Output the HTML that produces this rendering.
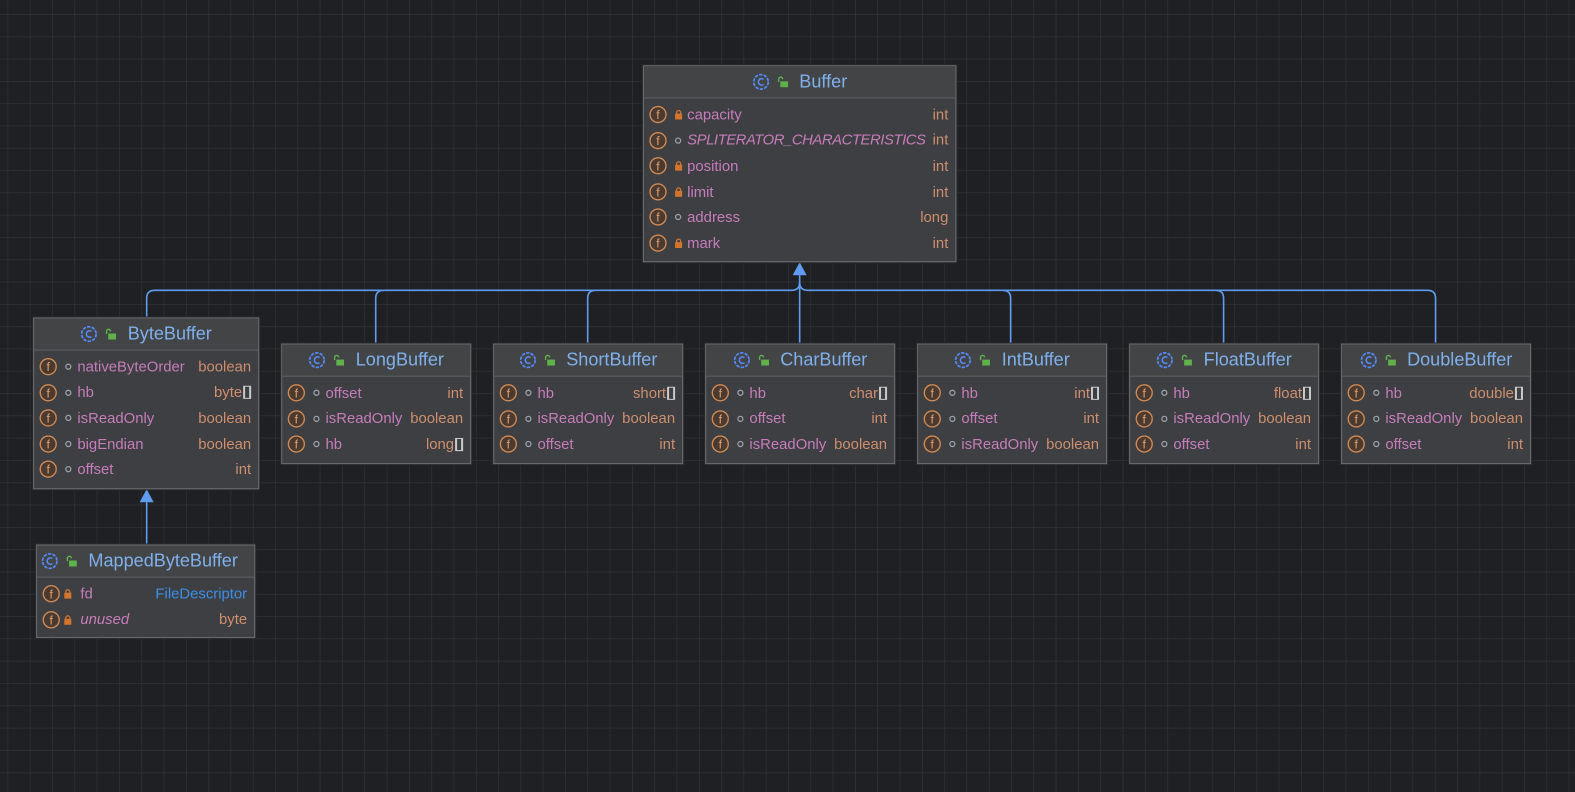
<!DOCTYPE html>
<html><head><meta charset="utf-8"><style>
*{margin:0;padding:0;box-sizing:border-box}
html,body{width:1575px;height:792px;overflow:hidden;background:#1f2023}
body{font-family:"Liberation Sans",sans-serif;position:relative}
#w{position:absolute;left:0;top:0;width:1575px;height:792px;transform:scale(1.0046);transform-origin:0 0}
#grid{position:absolute;left:0;top:0}
.box{position:absolute;background:#3d3f42;border:1px solid #6b6d70;box-shadow:0 0 0 1px #2a2b2d}
.hd{height:32px;background:#434446;border-bottom:1px solid #5e6063;display:flex;align-items:center;justify-content:center;color:#7fb0ec;font-size:18px}
.hd svg{margin-right:8px}
.bd{padding-top:4px}
.r{height:25.6px;display:flex;align-items:center;font-size:14.8px;position:relative}
.r .f{position:absolute;left:5px;top:3px}
.r .v{position:absolute;left:30px;top:8px}
.r .n{position:absolute;left:43px;color:#c77dbb}
.r .t{position:absolute;right:7px;color:#cf8e6d}
.i{font-style:italic}
.br{display:inline-block;width:8px;height:13px;border:1.5px solid #c9c9c9;border-left-width:2px;border-right-width:2px;vertical-align:-2px;margin-left:1px;box-sizing:border-box}
</style></head><body><div id="w">
<svg id="grid" width="1575" height="792">
<defs><pattern id="p" x="7.5" y="14" width="22.2" height="22.2" patternUnits="userSpaceOnUse"><path d="M0 0H22.2M0 0V22.2" stroke="#333538" stroke-width="1.3" fill="none"/></pattern>
<symbol id="ci" viewBox="0 0 16 16"><circle cx="8" cy="8" r="6.8" fill="none" stroke="#548af7" stroke-width="1.6" stroke-dasharray="3.2 1.1"/><path d="M10.4 5.6A3 3 0 1 0 10.4 10.4" fill="none" stroke="#548af7" stroke-width="1.5"/></symbol>
<symbol id="lk" viewBox="0 0 10 10"><rect x="2.5" y="4.5" width="7" height="5.5" fill="#5fb14a"/><path d="M1 5V2.5a1.8 1.8 0 0 1 3.6 0" fill="none" stroke="#5fb14a" stroke-width="1.3"/></symbol>
<symbol id="ff" viewBox="0 0 17 17"><circle cx="8.5" cy="8.5" r="7.5" fill="#4a3a30" stroke="#d08a55" stroke-width="1.3"/><text x="8.5" y="12.8" font-size="11.5" font-family="Liberation Sans" fill="#e0a070" text-anchor="middle">f</text></symbol>
</defs>
<rect width="1575" height="792" fill="url(#p)"/>
<g stroke="#5f9cf0" stroke-width="1.6" fill="none">
<path d="M796 274V289"/>
<path d="M796 281Q796 289 788 289H154Q146 289 146 297V316"/>
<path d="M796 281Q796 289 804 289H1421Q1429 289 1429 297V342"/>
<path d="M374 342V297Q374 289 382 289"/>
<path d="M585 342V297Q585 289 593 289"/>
<path d="M796 289V342"/>
<path d="M1006 342V297Q1006 289 998 289"/>
<path d="M1218 342V297Q1218 289 1210 289"/>
<path d="M146 500V542"/>
</g>
<path d="M796 261L803 274H789Z" fill="#5f9cf0"/>
<path d="M146 487L153 500H139Z" fill="#5f9cf0"/>
</svg>

<div class="box" style="left:640px;top:65px;width:312px;height:196px">
<div class="hd"><svg width="17" height="17"><use href="#ci"/></svg><svg width="11" height="11" style="margin-right:11px"><use href="#lk"/></svg>Buffer</div>
<div class="bd">
<div class="r"><svg class="f" width="18" height="18"><use href="#ff"/></svg><svg class="v" width="9" height="10" style="top:7px"><rect x="1" y="4" width="7" height="6" fill="#d3742f"/><path d="M2.5 4.5V3a2 2 0 0 1 4 0v1.5" fill="none" stroke="#d3742f" stroke-width="1.3"/></svg><span class="n">capacity</span><span class="t">int</span></div>
<div class="r"><svg class="f" width="18" height="18"><use href="#ff"/></svg><svg class="v" width="8" height="8"><circle cx="4" cy="4" r="2.5" fill="none" stroke="#9aa0a8" stroke-width="1.3"/></svg><span class="n i" style="letter-spacing:-0.45px">SPLITERATOR_CHARACTERISTICS</span><span class="t">int</span></div>
<div class="r"><svg class="f" width="18" height="18"><use href="#ff"/></svg><svg class="v" width="9" height="10" style="top:7px"><rect x="1" y="4" width="7" height="6" fill="#d3742f"/><path d="M2.5 4.5V3a2 2 0 0 1 4 0v1.5" fill="none" stroke="#d3742f" stroke-width="1.3"/></svg><span class="n">position</span><span class="t">int</span></div>
<div class="r"><svg class="f" width="18" height="18"><use href="#ff"/></svg><svg class="v" width="9" height="10" style="top:7px"><rect x="1" y="4" width="7" height="6" fill="#d3742f"/><path d="M2.5 4.5V3a2 2 0 0 1 4 0v1.5" fill="none" stroke="#d3742f" stroke-width="1.3"/></svg><span class="n">limit</span><span class="t">int</span></div>
<div class="r"><svg class="f" width="18" height="18"><use href="#ff"/></svg><svg class="v" width="8" height="8"><circle cx="4" cy="4" r="2.5" fill="none" stroke="#9aa0a8" stroke-width="1.3"/></svg><span class="n">address</span><span class="t">long</span></div>
<div class="r"><svg class="f" width="18" height="18"><use href="#ff"/></svg><svg class="v" width="9" height="10" style="top:7px"><rect x="1" y="4" width="7" height="6" fill="#d3742f"/><path d="M2.5 4.5V3a2 2 0 0 1 4 0v1.5" fill="none" stroke="#d3742f" stroke-width="1.3"/></svg><span class="n">mark</span><span class="t">int</span></div>
</div></div>

<div class="box" style="left:33px;top:316px;width:225px;height:171px">
<div class="hd"><svg width="17" height="17"><use href="#ci"/></svg><svg width="11" height="11" style="margin-right:11px"><use href="#lk"/></svg>ByteBuffer</div>
<div class="bd">
<div class="r"><svg class="f" width="18" height="18"><use href="#ff"/></svg><svg class="v" width="8" height="8"><circle cx="4" cy="4" r="2.5" fill="none" stroke="#9aa0a8" stroke-width="1.3"/></svg><span class="n">nativeByteOrder</span><span class="t">boolean</span></div>
<div class="r"><svg class="f" width="18" height="18"><use href="#ff"/></svg><svg class="v" width="8" height="8"><circle cx="4" cy="4" r="2.5" fill="none" stroke="#9aa0a8" stroke-width="1.3"/></svg><span class="n">hb</span><span class="t">byte<span class="br"></span></span></div>
<div class="r"><svg class="f" width="18" height="18"><use href="#ff"/></svg><svg class="v" width="8" height="8"><circle cx="4" cy="4" r="2.5" fill="none" stroke="#9aa0a8" stroke-width="1.3"/></svg><span class="n">isReadOnly</span><span class="t">boolean</span></div>
<div class="r"><svg class="f" width="18" height="18"><use href="#ff"/></svg><svg class="v" width="8" height="8"><circle cx="4" cy="4" r="2.5" fill="none" stroke="#9aa0a8" stroke-width="1.3"/></svg><span class="n">bigEndian</span><span class="t">boolean</span></div>
<div class="r"><svg class="f" width="18" height="18"><use href="#ff"/></svg><svg class="v" width="8" height="8"><circle cx="4" cy="4" r="2.5" fill="none" stroke="#9aa0a8" stroke-width="1.3"/></svg><span class="n">offset</span><span class="t">int</span></div>
</div></div>

<div class="box" style="left:36px;top:542px;width:218px;height:93px">
<div class="hd" style="justify-content:flex-start;padding-left:4px"><svg width="17" height="17"><use href="#ci"/></svg><svg width="11" height="11" style="margin-right:11px"><use href="#lk"/></svg>MappedByteBuffer</div>
<div class="bd">
<div class="r"><svg class="f" width="18" height="18"><use href="#ff"/></svg><svg class="v" width="9" height="10" style="top:7px;left:26px"><rect x="1" y="4" width="7" height="6" fill="#d3742f"/><path d="M2.5 4.5V3a2 2 0 0 1 4 0v1.5" fill="none" stroke="#d3742f" stroke-width="1.3"/></svg><span class="n" style="left:43px">fd</span><span class="t" style="color:#3b8fe6">FileDescriptor</span></div>
<div class="r"><svg class="f" width="18" height="18"><use href="#ff"/></svg><svg class="v" width="9" height="10" style="top:7px;left:26px"><rect x="1" y="4" width="7" height="6" fill="#d3742f"/><path d="M2.5 4.5V3a2 2 0 0 1 4 0v1.5" fill="none" stroke="#d3742f" stroke-width="1.3"/></svg><span class="n i" style="left:43px">unused</span><span class="t">byte</span></div>
</div></div>

<div class="box" style="left:280px;top:342px;width:189px;height:120px">
<div class="hd"><svg width="17" height="17"><use href="#ci"/></svg><svg width="11" height="11" style="margin-right:11px"><use href="#lk"/></svg>LongBuffer</div>
<div class="bd">
<div class="r"><svg class="f" width="18" height="18"><use href="#ff"/></svg><svg class="v" width="8" height="8"><circle cx="4" cy="4" r="2.5" fill="none" stroke="#9aa0a8" stroke-width="1.3"/></svg><span class="n">offset</span><span class="t">int</span></div>
<div class="r"><svg class="f" width="18" height="18"><use href="#ff"/></svg><svg class="v" width="8" height="8"><circle cx="4" cy="4" r="2.5" fill="none" stroke="#9aa0a8" stroke-width="1.3"/></svg><span class="n">isReadOnly</span><span class="t">boolean</span></div>
<div class="r"><svg class="f" width="18" height="18"><use href="#ff"/></svg><svg class="v" width="8" height="8"><circle cx="4" cy="4" r="2.5" fill="none" stroke="#9aa0a8" stroke-width="1.3"/></svg><span class="n">hb</span><span class="t">long<span class="br"></span></span></div>
</div></div>

<div class="box" style="left:491px;top:342px;width:189px;height:120px">
<div class="hd"><svg width="17" height="17"><use href="#ci"/></svg><svg width="11" height="11" style="margin-right:11px"><use href="#lk"/></svg>ShortBuffer</div>
<div class="bd">
<div class="r"><svg class="f" width="18" height="18"><use href="#ff"/></svg><svg class="v" width="8" height="8"><circle cx="4" cy="4" r="2.5" fill="none" stroke="#9aa0a8" stroke-width="1.3"/></svg><span class="n">hb</span><span class="t">short<span class="br"></span></span></div>
<div class="r"><svg class="f" width="18" height="18"><use href="#ff"/></svg><svg class="v" width="8" height="8"><circle cx="4" cy="4" r="2.5" fill="none" stroke="#9aa0a8" stroke-width="1.3"/></svg><span class="n">isReadOnly</span><span class="t">boolean</span></div>
<div class="r"><svg class="f" width="18" height="18"><use href="#ff"/></svg><svg class="v" width="8" height="8"><circle cx="4" cy="4" r="2.5" fill="none" stroke="#9aa0a8" stroke-width="1.3"/></svg><span class="n">offset</span><span class="t">int</span></div>
</div></div>

<div class="box" style="left:702px;top:342px;width:189px;height:120px">
<div class="hd"><svg width="17" height="17"><use href="#ci"/></svg><svg width="11" height="11" style="margin-right:11px"><use href="#lk"/></svg>CharBuffer</div>
<div class="bd">
<div class="r"><svg class="f" width="18" height="18"><use href="#ff"/></svg><svg class="v" width="8" height="8"><circle cx="4" cy="4" r="2.5" fill="none" stroke="#9aa0a8" stroke-width="1.3"/></svg><span class="n">hb</span><span class="t">char<span class="br"></span></span></div>
<div class="r"><svg class="f" width="18" height="18"><use href="#ff"/></svg><svg class="v" width="8" height="8"><circle cx="4" cy="4" r="2.5" fill="none" stroke="#9aa0a8" stroke-width="1.3"/></svg><span class="n">offset</span><span class="t">int</span></div>
<div class="r"><svg class="f" width="18" height="18"><use href="#ff"/></svg><svg class="v" width="8" height="8"><circle cx="4" cy="4" r="2.5" fill="none" stroke="#9aa0a8" stroke-width="1.3"/></svg><span class="n">isReadOnly</span><span class="t">boolean</span></div>
</div></div>

<div class="box" style="left:913px;top:342px;width:189px;height:120px">
<div class="hd"><svg width="17" height="17"><use href="#ci"/></svg><svg width="11" height="11" style="margin-right:11px"><use href="#lk"/></svg>IntBuffer</div>
<div class="bd">
<div class="r"><svg class="f" width="18" height="18"><use href="#ff"/></svg><svg class="v" width="8" height="8"><circle cx="4" cy="4" r="2.5" fill="none" stroke="#9aa0a8" stroke-width="1.3"/></svg><span class="n">hb</span><span class="t">int<span class="br"></span></span></div>
<div class="r"><svg class="f" width="18" height="18"><use href="#ff"/></svg><svg class="v" width="8" height="8"><circle cx="4" cy="4" r="2.5" fill="none" stroke="#9aa0a8" stroke-width="1.3"/></svg><span class="n">offset</span><span class="t">int</span></div>
<div class="r"><svg class="f" width="18" height="18"><use href="#ff"/></svg><svg class="v" width="8" height="8"><circle cx="4" cy="4" r="2.5" fill="none" stroke="#9aa0a8" stroke-width="1.3"/></svg><span class="n">isReadOnly</span><span class="t">boolean</span></div>
</div></div>

<div class="box" style="left:1124px;top:342px;width:189px;height:120px">
<div class="hd"><svg width="17" height="17"><use href="#ci"/></svg><svg width="11" height="11" style="margin-right:11px"><use href="#lk"/></svg>FloatBuffer</div>
<div class="bd">
<div class="r"><svg class="f" width="18" height="18"><use href="#ff"/></svg><svg class="v" width="8" height="8"><circle cx="4" cy="4" r="2.5" fill="none" stroke="#9aa0a8" stroke-width="1.3"/></svg><span class="n">hb</span><span class="t">float<span class="br"></span></span></div>
<div class="r"><svg class="f" width="18" height="18"><use href="#ff"/></svg><svg class="v" width="8" height="8"><circle cx="4" cy="4" r="2.5" fill="none" stroke="#9aa0a8" stroke-width="1.3"/></svg><span class="n">isReadOnly</span><span class="t">boolean</span></div>
<div class="r"><svg class="f" width="18" height="18"><use href="#ff"/></svg><svg class="v" width="8" height="8"><circle cx="4" cy="4" r="2.5" fill="none" stroke="#9aa0a8" stroke-width="1.3"/></svg><span class="n">offset</span><span class="t">int</span></div>
</div></div>

<div class="box" style="left:1335px;top:342px;width:189px;height:120px">
<div class="hd"><svg width="17" height="17"><use href="#ci"/></svg><svg width="11" height="11" style="margin-right:11px"><use href="#lk"/></svg>DoubleBuffer</div>
<div class="bd">
<div class="r"><svg class="f" width="18" height="18"><use href="#ff"/></svg><svg class="v" width="8" height="8"><circle cx="4" cy="4" r="2.5" fill="none" stroke="#9aa0a8" stroke-width="1.3"/></svg><span class="n">hb</span><span class="t">double<span class="br"></span></span></div>
<div class="r"><svg class="f" width="18" height="18"><use href="#ff"/></svg><svg class="v" width="8" height="8"><circle cx="4" cy="4" r="2.5" fill="none" stroke="#9aa0a8" stroke-width="1.3"/></svg><span class="n">isReadOnly</span><span class="t">boolean</span></div>
<div class="r"><svg class="f" width="18" height="18"><use href="#ff"/></svg><svg class="v" width="8" height="8"><circle cx="4" cy="4" r="2.5" fill="none" stroke="#9aa0a8" stroke-width="1.3"/></svg><span class="n">offset</span><span class="t">int</span></div>
</div></div>
</div></body></html>
